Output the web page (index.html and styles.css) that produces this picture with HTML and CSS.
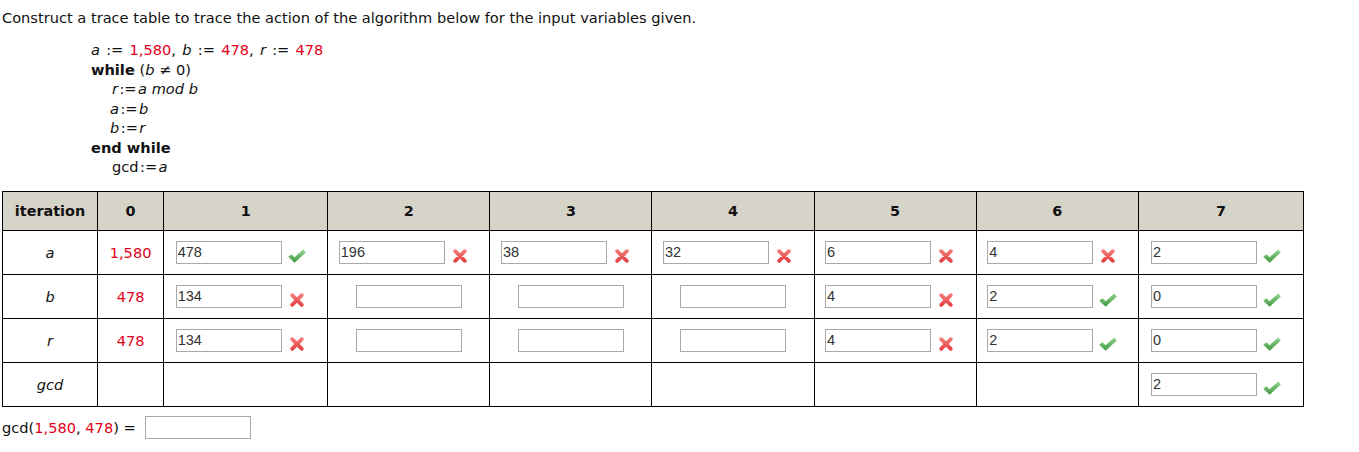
FILE: index.html
```html
<!DOCTYPE html>
<html>
<head>
<meta charset="utf-8">
<link rel="stylesheet" href="styles.css">
</head>
<body>
<div class="page">
  <p class="intro">Construct a trace table to trace the action of the algorithm below for the input variables given.</p>
  <div class="algo">
    <div class="ln wide"><i>a</i> := <span class="num">1,580</span>, <i>b</i> := <span class="num">478</span>, <i>r</i> := <span class="num">478</span></div>
    <div class="ln"><b>while</b> (<i>b</i> ≠ 0)</div>
    <div class="ln ind"><i>r</i>&#8202;:=&#8202;<i>a mod b</i></div>
    <div class="ln ind2"><i>a</i>&#8202;:=&#8202;<i>b</i></div>
    <div class="ln ind2"><i>b</i>&#8202;:=&#8202;<i>r</i></div>
    <div class="ln"><b>end while</b></div>
    <div class="ln ind">gcd&#8202;:=&#8202;<i>a</i></div>
  </div>

  <table class="trace">
    <colgroup>
      <col class="c-lab"><col class="c-0"><col class="c-1"><col class="c-n"><col class="c-n"><col class="c-n"><col class="c-n"><col class="c-6"><col class="c-7">
    </colgroup>
    <thead>
      <tr>
        <th>iteration</th><th>0</th><th>1</th><th>2</th><th>3</th><th>4</th><th>5</th><th>6</th><th>7</th>
      </tr>
    </thead>
    <tbody>
      <tr>
        <td class="lab">a</td>
        <td class="num">1,580</td>
        <td><span class="fld"><input value="478"><span class="mk"><svg viewBox="0 0 20 16"><use href="#chk"/></svg></span></span></td>
        <td><span class="fld"><input value="196"><span class="mk"><svg viewBox="0 0 20 16"><use href="#crs"/></svg></span></span></td>
        <td><span class="fld"><input value="38"><span class="mk"><svg viewBox="0 0 20 16"><use href="#crs"/></svg></span></span></td>
        <td><span class="fld"><input value="32"><span class="mk"><svg viewBox="0 0 20 16"><use href="#crs"/></svg></span></span></td>
        <td><span class="fld"><input value="6"><span class="mk"><svg viewBox="0 0 20 16"><use href="#crs"/></svg></span></span></td>
        <td><span class="fld"><input value="4"><span class="mk"><svg viewBox="0 0 20 16"><use href="#crs"/></svg></span></span></td>
        <td><span class="fld"><input value="2"><span class="mk"><svg viewBox="0 0 20 16"><use href="#chk"/></svg></span></span></td>
      </tr>
      <tr>
        <td class="lab">b</td>
        <td class="num">478</td>
        <td><span class="fld"><input value="134"><span class="mk"><svg viewBox="0 0 20 16"><use href="#crs"/></svg></span></span></td>
        <td><input value=""></td>
        <td><input value=""></td>
        <td><input value=""></td>
        <td><span class="fld"><input value="4"><span class="mk"><svg viewBox="0 0 20 16"><use href="#crs"/></svg></span></span></td>
        <td><span class="fld"><input value="2"><span class="mk"><svg viewBox="0 0 20 16"><use href="#chk"/></svg></span></span></td>
        <td><span class="fld"><input value="0"><span class="mk"><svg viewBox="0 0 20 16"><use href="#chk"/></svg></span></span></td>
      </tr>
      <tr>
        <td class="lab">r</td>
        <td class="num">478</td>
        <td><span class="fld"><input value="134"><span class="mk"><svg viewBox="0 0 20 16"><use href="#crs"/></svg></span></span></td>
        <td><input value=""></td>
        <td><input value=""></td>
        <td><input value=""></td>
        <td><span class="fld"><input value="4"><span class="mk"><svg viewBox="0 0 20 16"><use href="#crs"/></svg></span></span></td>
        <td><span class="fld"><input value="2"><span class="mk"><svg viewBox="0 0 20 16"><use href="#chk"/></svg></span></span></td>
        <td><span class="fld"><input value="0"><span class="mk"><svg viewBox="0 0 20 16"><use href="#chk"/></svg></span></span></td>
      </tr>
      <tr>
        <td class="lab">gcd</td>
        <td></td><td></td><td></td><td></td><td></td><td></td><td></td>
        <td><span class="fld"><input value="2"><span class="mk"><svg viewBox="0 0 20 16"><use href="#chk"/></svg></span></span></td>
      </tr>
    </tbody>
  </table>

  <div class="answer">
    <span>gcd(<span class="num">1,580</span>, <span class="num">478</span>) =</span>
    <input value="">
  </div>
</div>

<svg class="defs" width="0" height="0">
  <defs>
    <linearGradient id="gg" x1="0" y1="0" x2="0" y2="1">
      <stop offset="0" stop-color="#93d493"/>
      <stop offset="1" stop-color="#3f9a3f"/>
    </linearGradient>
    <linearGradient id="rg" x1="0" y1="0" x2="0" y2="1">
      <stop offset="0" stop-color="#f47777"/>
      <stop offset="1" stop-color="#e54444"/>
    </linearGradient>
    <symbol id="chk" viewBox="0 0 20 16">
      <path d="M1.2 8.8 L4.5 6.2 L7.6 9.2 L16.2 1.4 L18.8 4.4 L7.6 14.8 Z" fill="url(#gg)"/>
    </symbol>
    <symbol id="crs" viewBox="0 0 20 16">
      <path d="M5.2 3.2 L14.8 12.8 M14.8 3.2 L5.2 12.8" stroke="url(#rg)" stroke-width="3.8" stroke-linecap="round" fill="none"/>
    </symbol>
  </defs>
</svg>
</body>
</html>
```

FILE: styles.css
```css
html, body {
  margin: 0;
  padding: 0;
  background: #fff;
}

body {
  font-family: "DejaVu Sans", Verdana, sans-serif;
  font-size: 14.6px;
  color: #111;
}

.page {
  padding: 8px 0 0 2px;
}

.intro {
  margin: 0;
  line-height: 20px;
}

.num {
  color: #e2001a;
}

.algo {
  margin: 12px 0 0 89px;
}

.algo .ln {
  line-height: 19.5px;
  white-space: nowrap;
}

.algo .wide {
  word-spacing: 1.6px;
}

.algo .ind {
  padding-left: 21px;
}

.algo .ind2 {
  padding-left: 19px;
}

.trace {
  margin-top: 14px;
  border-collapse: collapse;
  table-layout: fixed;
  width: 1302px;
}

.c-lab { width: 95px; }
.c-0 { width: 66px; }
.c-1 { width: 164px; }
.c-n { width: 162px; }
.c-6 { width: 162px; }
.c-7 { width: 165px; }

.trace th,
.trace td {
  border: 1px solid #000;
  padding: 0;
  text-align: center;
  vertical-align: middle;
}

.trace th {
  background: #d6d3c9;
  height: 38px;
  font-weight: bold;
  font-size: 14.4px;
  color: #111;
}

.trace td {
  height: 43px;
}

.trace td.lab {
  font-style: italic;
}

.trace td.num {
  color: #e2001a;
}

input {
  box-sizing: border-box;
  width: 106px;
  height: 23px;
  border: 1px solid #a9a9a9;
  padding: 0 1px;
  margin: 0;
  font-family: "Liberation Sans", Arial, sans-serif;
  font-size: 14.5px;
  color: #333;
  background: #fff;
  vertical-align: middle;
  outline: none;
}

.fld {
  display: inline-flex;
  align-items: center;
  vertical-align: middle;
  width: 140px;
  text-align: left;
}

.mk {
  display: block;
  width: 20px;
  height: 16px;
  margin: 8px 0 0 5px;
}

.mk svg {
  width: 20px;
  height: 16px;
  display: block;
}

.answer {
  display: flex;
  align-items: center;
  gap: 9px;
  margin-top: 9px;
}

.defs {
  position: absolute;
  width: 0;
  height: 0;
}
```
